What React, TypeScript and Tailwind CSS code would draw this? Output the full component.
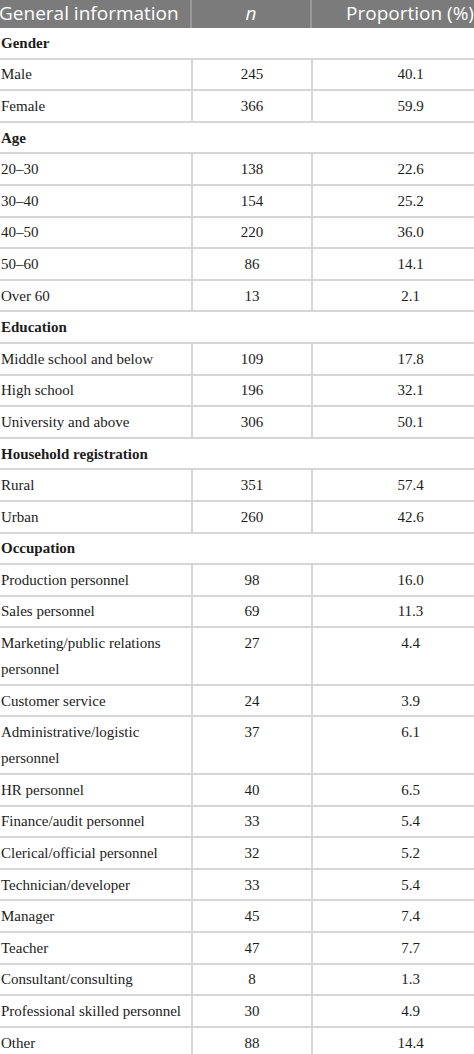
import React from "react";

type Row =
  | { kind: "cat"; label: string }
  | { kind: "data"; label: string; n: string; p: string };

const rows: Row[] = [
  { kind: "cat", label: "Gender" },
  { kind: "data", label: "Male", n: "245", p: "40.1" },
  { kind: "data", label: "Female", n: "366", p: "59.9" },
  { kind: "cat", label: "Age" },
  { kind: "data", label: "20–30", n: "138", p: "22.6" },
  { kind: "data", label: "30–40", n: "154", p: "25.2" },
  { kind: "data", label: "40–50", n: "220", p: "36.0" },
  { kind: "data", label: "50–60", n: "86", p: "14.1" },
  { kind: "data", label: "Over 60", n: "13", p: "2.1" },
  { kind: "cat", label: "Education" },
  { kind: "data", label: "Middle school and below", n: "109", p: "17.8" },
  { kind: "data", label: "High school", n: "196", p: "32.1" },
  { kind: "data", label: "University and above", n: "306", p: "50.1" },
  { kind: "cat", label: "Household registration" },
  { kind: "data", label: "Rural", n: "351", p: "57.4" },
  { kind: "data", label: "Urban", n: "260", p: "42.6" },
  { kind: "cat", label: "Occupation" },
  { kind: "data", label: "Production personnel", n: "98", p: "16.0" },
  { kind: "data", label: "Sales personnel", n: "69", p: "11.3" },
  { kind: "data", label: "Marketing/public relations personnel", n: "27", p: "4.4" },
  { kind: "data", label: "Customer service", n: "24", p: "3.9" },
  { kind: "data", label: "Administrative/logistic personnel", n: "37", p: "6.1" },
  { kind: "data", label: "HR personnel", n: "40", p: "6.5" },
  { kind: "data", label: "Finance/audit personnel", n: "33", p: "5.4" },
  { kind: "data", label: "Clerical/official personnel", n: "32", p: "5.2" },
  { kind: "data", label: "Technician/developer", n: "33", p: "5.4" },
  { kind: "data", label: "Manager", n: "45", p: "7.4" },
  { kind: "data", label: "Teacher", n: "47", p: "7.7" },
  { kind: "data", label: "Consultant/consulting", n: "8", p: "1.3" },
  { kind: "data", label: "Professional skilled personnel", n: "30", p: "4.9" },
  { kind: "data", label: "Other", n: "88", p: "14.4" },
];

export default function App() {
  return (
    <div className="w-[474px] h-[1054px] overflow-hidden bg-white">
      <div className="w-[508px]">
        <div className="flex h-[28px] bg-[#7b7b7b] text-white text-[19px] leading-[26px] font-['Open_Sans',sans-serif]">
          <div className="w-[193px] shrink-0 border-r-2 border-[#9a9a9a] pl-0 -ml-[1px]">General information</div>
          <div className="w-[120px] shrink-0 border-r-2 border-[#9a9a9a] text-center italic">n</div>
          <div className="flex-1 text-center">Proportion (%)</div>
        </div>
        <div className="font-['Liberation_Serif',serif] text-[15px] leading-[26px] text-[#1c1c1c]">
          {rows.map((r, i) =>
            r.kind === "cat" ? (
              <div key={i} className="border-b-2 border-[#d6d6d6] py-[1.8px] pl-[1px] font-bold">
                {r.label}
              </div>
            ) : (
              <div key={i} className="flex border-b-2 border-[#d6d6d6]">
                <div className="w-[193px] shrink-0 border-r-2 border-[#d6d6d6] py-[1.8px] pl-[1px] pr-[4px]">{r.label}</div>
                <div className="w-[120px] shrink-0 border-r-2 border-[#d6d6d6] py-[1.8px] text-center">{r.n}</div>
                <div className="flex-1 py-[1.8px] text-center">{r.p}</div>
              </div>
            )
          )}
        </div>
      </div>
    </div>
  );
}
